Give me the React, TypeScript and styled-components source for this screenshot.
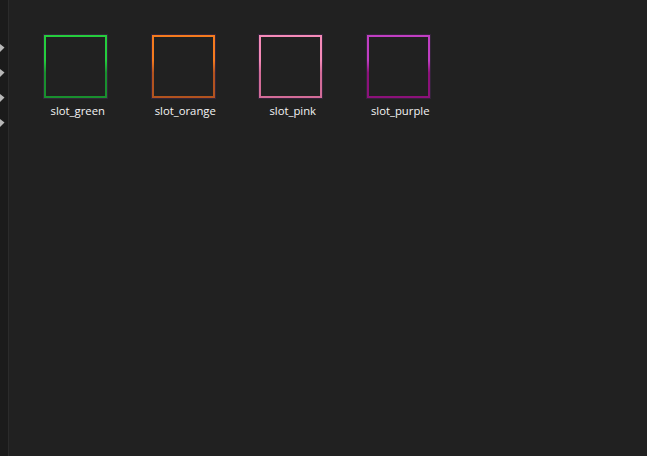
import React from "react";
import styled, { createGlobalStyle } from "styled-components";

const Global = createGlobalStyle`
  html, body { margin: 0; padding: 0; background: #212121; }
  body { font-family: "Segoe UI", "Open Sans", "Noto Sans", sans-serif; }
  #root { height: 456px; }
`;

const Page = styled.div`
  display: flex;
  height: 456px;
  width: 647px;
  background: #212121;
  overflow: hidden;
`;

const Rail = styled.div`
  width: 8px;
  flex: none;
  background: #1b1b1b;
  border-right: 1px solid #2b2b2b;
  display: flex;
  flex-direction: column;
  gap: 17px;
  padding-top: 44px;
`;

const Arrow = styled.svg`
  display: block;
  width: 5px;
  height: 8px;
`;

const Main = styled.div`
  flex: 1;
  padding: 35px 0 0 13px;
`;

const Grid = styled.div`
  display: grid;
  grid-template-columns: repeat(4, 107.5px);
  align-items: start;
`;

const Item = styled.div`
  display: flex;
  flex-direction: column;
  align-items: center;
  gap: 5px;
`;

const Swatch = styled.div<{ $top: string; $bottom: string }>`
  width: 63px;
  height: 63px;
  box-sizing: border-box;
  padding: 2px;
  background: linear-gradient(${(p) => p.$top} 0%, ${(p) => p.$top} 40%, ${(p) => p.$bottom} 60%, ${(p) => p.$bottom} 100%);
  box-shadow: 0 0 0 1px rgba(70, 40, 80, 0.55);
`;

const Inner = styled.div`
  width: 100%;
  height: 100%;
  background: #212121;
`;

const Label = styled.div`
  color: #f4f4f4;
  font-size: 11.3px;
  line-height: 15px;
  padding-left: 4px;
`;

const slots = [
  { name: "slot_green", top: "#25cc3d", bottom: "#198f2e" },
  { name: "slot_orange", top: "#f47b1e", bottom: "#b2531f" },
  { name: "slot_pink", top: "#f58ab7", bottom: "#d36c98" },
  { name: "slot_purple", top: "#c03ec2", bottom: "#8c117a" },
];

export default function App() {
  return (
    <>
      <Global />
      <Page>
        <Rail>
          {[0, 1, 2, 3].map((i) => (
            <Arrow key={i} viewBox="0 0 5 8">
              <path d="M0 0 L4.5 3.5 L3 5 L0 8 Z" fill="#b8b8b8" />
            </Arrow>
          ))}
        </Rail>
        <Main>
          <Grid>
            {slots.map((s) => (
              <Item key={s.name}>
                <Swatch $top={s.top} $bottom={s.bottom}>
                  <Inner />
                </Swatch>
                <Label>{s.name}</Label>
              </Item>
            ))}
          </Grid>
        </Main>
      </Page>
    </>
  );
}
